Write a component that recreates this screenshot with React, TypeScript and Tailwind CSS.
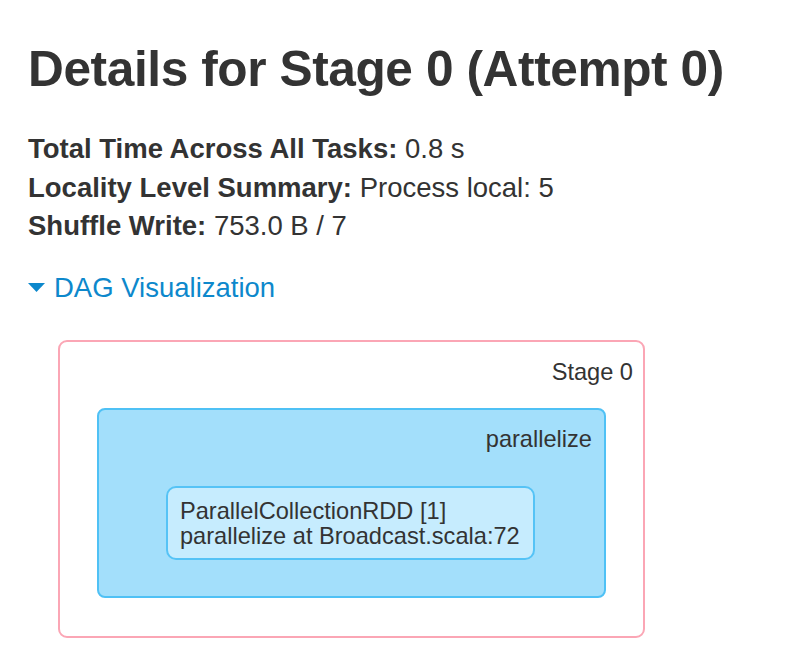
export default function App() {
  return (
    <div className="min-h-screen bg-white text-[#333333] font-['Liberation_Sans',Arial,sans-serif] px-[28px] pt-[43px]">
      <h3 className="text-[49.6px] font-bold leading-[52px] tracking-[-0.4px]">Details for Stage 0 (Attempt 0)</h3>

      <ul className="mt-[35px] text-[27.5px] leading-[38.5px]">
        <li>
          <strong>Total Time Across All Tasks:</strong> 0.8 s
        </li>
        <li>
          <strong>Locality Level Summary:</strong> Process local: 5
        </li>
        <li>
          <strong>Shuffle Write:</strong> 753.0 B / 7
        </li>
      </ul>

      <div className="mt-[26px] flex items-center gap-[9px] text-[27.5px] text-[#0d88cc] leading-[32px]">
        <svg width="17" height="10" viewBox="0 0 17 10" className="mt-[1px]">
          <polygon points="0,0 17,0 8.5,9" fill="#0d88cc" />
        </svg>
        <span>DAG Visualization</span>
      </div>

      <div className="mt-[36px] ml-[30px] w-[587px] h-[298px] border-2 border-[#fba6b5] rounded-[9px] flex flex-col pt-[15px] pr-[10px] pb-[38px] pl-[37px]">
        <div className="text-right text-[23.6px] leading-[30px]">Stage 0</div>
        <div className="mt-[21px] mr-[27px] flex-1 bg-[#a3dffb] border-[2px] border-[#4fc1f5] rounded-[8px] flex flex-col pt-[14px] pr-[12px]">
          <div className="text-right text-[23.6px] leading-[30px]">parallelize</div>
          <div className="mt-[32px] ml-[67px] w-[369px] h-[74px] bg-[#c6ecfe] border-[2px] border-[#55c3f6] rounded-[10px] px-[12px] pt-[11px] text-[23.6px] leading-[25px] whitespace-nowrap">
            <div>ParallelCollectionRDD [1]</div>
            <div>parallelize at Broadcast.scala:72</div>
          </div>
        </div>
      </div>
    </div>
  )
}
